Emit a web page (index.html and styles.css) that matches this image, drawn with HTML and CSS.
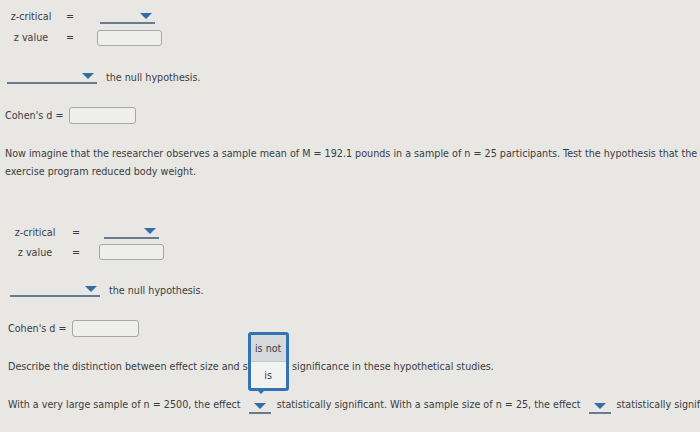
FILE: index.html
```html
<!DOCTYPE html>
<html lang="en">
<head>
  <meta charset="UTF-8" />
  <meta name="viewport" content="width=device-width, initial-scale=1.0" />
  <title>Hypothesis Test</title>
  <link rel="stylesheet" href="styles.css">
</head>
<body>
  <div class="sheet">
    <div class="stats">
      <span class="label">z-critical</span><span class="eq">=</span>
      <span class="select short"><span class="caret"></span></span>
      <span class="label">z value</span><span class="eq">=</span>
      <span class="field"></span>
    </div>

    <div class="decision">
      <span class="select wide"><span class="caret"></span></span>
      <span>the null hypothesis.</span>
    </div>

    <div class="cohen">
      <span>Cohen's d =</span>
      <span class="field"></span>
    </div>

    <p class="prompt">Now imagine that the researcher observes a sample mean of M = 192.1 pounds in a sample of n = 25 participants. Test the hypothesis that the<br>exercise program reduced body weight.</p>

    <div class="stats lower">
      <span class="label">z-critical</span><span class="eq">=</span>
      <span class="select short"><span class="caret"></span></span>
      <span class="label">z value</span><span class="eq">=</span>
      <span class="field"></span>
    </div>

    <div class="decision lower">
      <span class="select wide"><span class="caret"></span></span>
      <span>the null hypothesis.</span>
    </div>

    <div class="cohen lower">
      <span>Cohen's d =</span>
      <span class="field"></span>
    </div>

    <p class="line describe">Describe the distinction between effect size and statistical significance in these hypothetical studies.</p>

    <p class="line summary">
      With a very large sample of n = 2500, the effect
      <span class="select tiny open">
        <span class="caret"></span>
        <span class="menu">
          <span class="option active">is not</span>
          <span class="option">is</span>
        </span>
      </span>
      statistically significant. With a sample size of n = 25, the effect
      <span class="select tiny"><span class="caret"></span></span>
      statistically significant.
    </p>
  </div>
</body>
</html>
```

FILE: styles.css
```css
:root {
  --page-bg: #e8e7e4;
  --text: #3a3c3f;
  --caret: #2f6ea8;
  --rule: #687a8e;
  --box: #a3a8ad;
  --menu-border: #3473b3;
}
html, body {
  margin: 0;
  height: 100%;
  overflow: hidden;
}
body {
  background: var(--page-bg);
  font-family: 'DejaVu Sans', Verdana, sans-serif;
  font-size: 9.6px;
  color: var(--text);
}
.sheet {
  white-space: nowrap;
}

/* label = control rows */
.stats {
  display: grid;
  grid-template-columns: 50px 28px auto;
  grid-auto-rows: 21px;
  align-items: center;
  padding: 6px 0 0 6px;
}
.stats .label {
  text-align: center;
}
.stats .eq {
  text-align: center;
}
.stats .select {
  margin-left: 16px;
}
.stats .field {
  margin-left: 13px;
}
.stats.lower {
  grid-template-columns: 50px 32px auto;
  grid-auto-rows: 20px;
  padding: 0 0 0 10px;
  margin-top: 41px;
}
.stats.lower .select {
  margin-left: 12px;
}
.stats.lower .field {
  margin-left: 7px;
}

/* dropdown with underline */
.select {
  display: inline-flex;
  justify-content: flex-end;
  align-items: center;
  height: 12px;
  border-bottom: 2px solid var(--rule);
  box-sizing: content-box;
  vertical-align: middle;
}
.select.short {
  width: 55px;
}
.select.wide {
  width: 90px;
}
.select.tiny {
  width: 22px;
  justify-content: center;
  position: relative;
  margin: 0 3px 0 5px;
  top: 2px;
}
.caret {
  width: 0;
  height: 0;
  border-left: 6px solid transparent;
  border-right: 6px solid transparent;
  border-top: 6px solid var(--caret);
  margin-right: 3px;
}
.select.tiny .caret {
  margin-right: 0;
}

.field {
  display: inline-block;
  width: 65px;
  height: 16px;
  border: 1px solid var(--box);
  border-radius: 3px;
  background: #eeeeec;
  box-sizing: border-box;
}

.decision {
  display: flex;
  align-items: center;
  gap: 9px;
  height: 20px;
  margin-top: 19px;
  padding-left: 7px;
}
.decision.lower {
  margin-top: 18px;
  padding-left: 10px;
}

.cohen {
  display: flex;
  align-items: center;
  gap: 5px;
  height: 20px;
  margin-top: 18px;
  padding-left: 5px;
}
.cohen .field {
  width: 67px;
  height: 17px;
}
.cohen.lower {
  margin-top: 18px;
  padding-left: 8px;
}

.prompt {
  margin: 20px 0 0;
  padding-left: 5px;
  line-height: 18px;
}

.line {
  margin: 0;
  height: 20px;
  line-height: 20px;
  padding-left: 8px;
}
.describe {
  margin-top: 19px;
}
.summary {
  margin-top: 18px;
}

/* open dropdown list */
.menu {
  position: absolute;
  left: -1px;
  bottom: calc(100% + 9px);
  width: 41px;
  display: flex;
  flex-direction: column;
  border: 3px solid var(--menu-border);
  border-radius: 3px;
  background: #f2f2f1;
  box-sizing: border-box;
  line-height: normal;
}
.menu::after {
  content: '';
  position: absolute;
  top: 100%;
  left: 4px;
  border-left: 6px solid transparent;
  border-right: 6px solid transparent;
  border-top: 6px solid var(--menu-border);
}
.option {
  height: 26px;
  display: flex;
  align-items: center;
  justify-content: center;
}
.option.active {
  background: #d6dadd;
  border-bottom: 1px solid #c3c8cc;
}
```
